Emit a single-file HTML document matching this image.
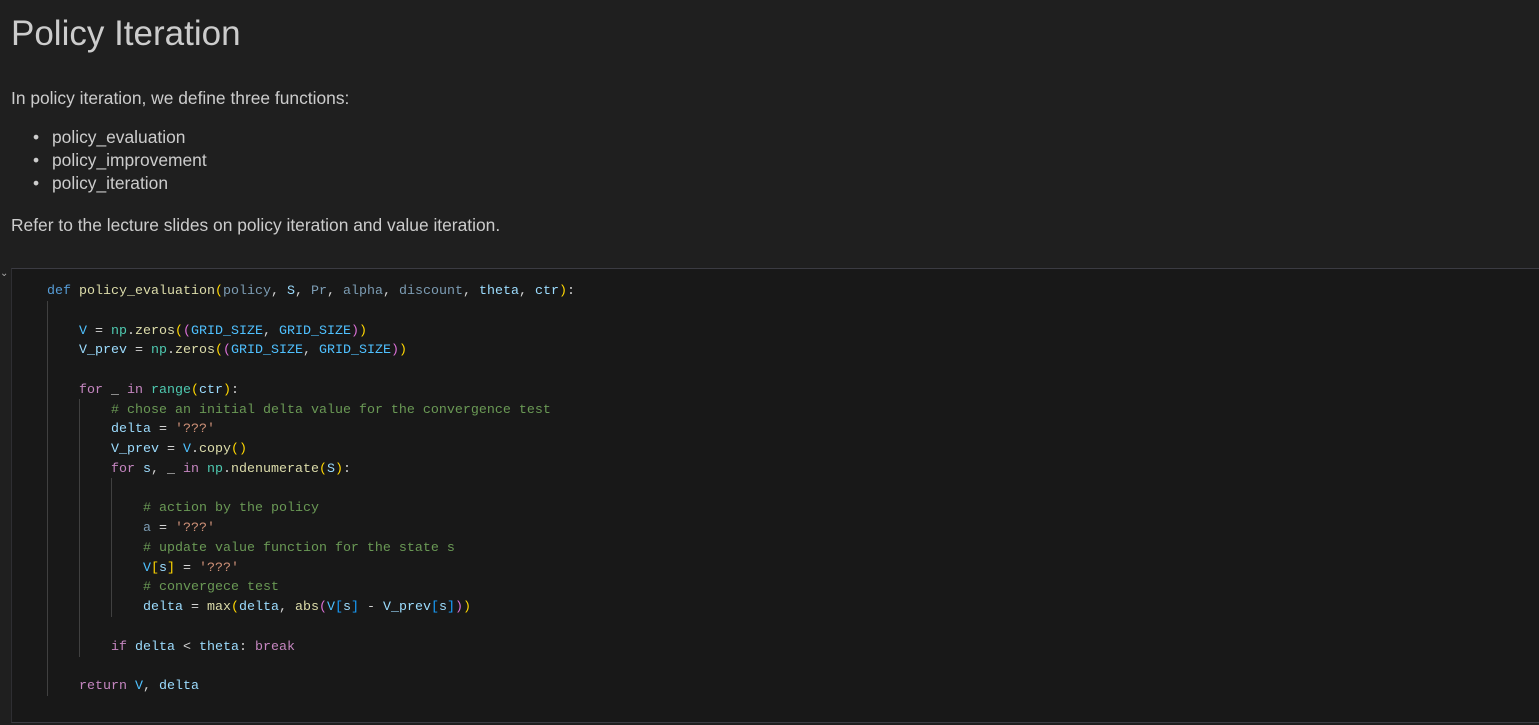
<!DOCTYPE html>
<html><head><meta charset="utf-8"><style>
html,body{margin:0;padding:0;background:#1f1f1f;width:1539px;height:725px;overflow:hidden;}
body{font-family:"Liberation Sans",sans-serif;color:#cccccc;position:relative;}
.t{position:absolute;white-space:nowrap;}
h1{position:absolute;left:11px;top:14px;margin:0;font-weight:normal;font-size:35px;color:#cccccc;}
.p{font-size:17.4px;}
.cell{position:absolute;left:11px;top:268px;width:1540px;height:453px;background:#181818;border-top:1px solid #3b3b42;border-left:1px solid #2e2e32;border-bottom:1px solid #3b3b42;}
.code{position:absolute;left:47px;top:282px;font-family:"Liberation Mono",monospace;font-size:13.33px;line-height:19.75px;color:#9cdcfe;white-space:pre;}
.g{position:absolute;width:1px;background:#404040;}
.k{color:#569cd6}.f{color:#dcdcaa}.d{color:#7c9cb3}.c{color:#c586c0}.m{color:#6a9955}.s{color:#ce9178}
.y{color:#ffd700}.pk{color:#da70d6}.b{color:#179fff}.cn{color:#4fc1ff}.n{color:#4ec9b0}.w{color:#d4d4d4}
</style></head><body>
<h1>Policy Iteration</h1>
<div class="t p" style="left:11px;top:88px">In policy iteration, we define three functions:</div>
<div class="t p" style="left:33px;top:127px">•</div><div class="t p" style="left:52px;top:127px">policy_evaluation</div>
<div class="t p" style="left:33px;top:150px">•</div><div class="t p" style="left:52px;top:150px">policy_improvement</div>
<div class="t p" style="left:33px;top:173px">•</div><div class="t p" style="left:52px;top:173px">policy_iteration</div>
<div class="t p" style="left:11px;top:215px">Refer to the lecture slides on policy iteration and value iteration.</div>
<div class="t" style="left:0;top:268px;font-size:10px;color:#aaa">&#8964;</div>
<div class="cell"></div>
<div class="g" style="left:47px;top:301px;height:395px"></div>
<div class="g" style="left:79px;top:399px;height:258px"></div>
<div class="g" style="left:111px;top:478px;height:139px"></div>
<div class="code"><span class="k">def</span> <span class="f">policy_evaluation</span><span class="y">(</span><span class="d">policy</span><span class="w">, </span>S<span class="w">, </span><span class="d">Pr</span><span class="w">, </span><span class="d">alpha</span><span class="w">, </span><span class="d">discount</span><span class="w">, </span>theta<span class="w">, </span>ctr<span class="y">)</span><span class="w">:</span>

    <span class="cn">V</span><span class="w"> = </span><span class="n">np</span><span class="w">.</span><span class="f">zeros</span><span class="y">(</span><span class="pk">(</span><span class="cn">GRID_SIZE</span><span class="w">, </span><span class="cn">GRID_SIZE</span><span class="pk">)</span><span class="y">)</span>
    V_prev<span class="w"> = </span><span class="n">np</span><span class="w">.</span><span class="f">zeros</span><span class="y">(</span><span class="pk">(</span><span class="cn">GRID_SIZE</span><span class="w">, </span><span class="cn">GRID_SIZE</span><span class="pk">)</span><span class="y">)</span>

    <span class="c">for</span> <span class="w">_</span> <span class="c">in</span> <span class="n">range</span><span class="y">(</span>ctr<span class="y">)</span><span class="w">:</span>
        <span class="m"># chose an initial delta value for the convergence test</span>
        delta<span class="w"> = </span><span class="s">'???'</span>
        V_prev<span class="w"> = </span><span class="cn">V</span><span class="w">.</span><span class="f">copy</span><span class="y">()</span>
        <span class="c">for</span> s<span class="w">, _ </span><span class="c">in</span> <span class="n">np</span><span class="w">.</span><span class="f">ndenumerate</span><span class="y">(</span>S<span class="y">)</span><span class="w">:</span>

            <span class="m"># action by the policy</span>
            <span class="d">a</span><span class="w"> = </span><span class="s">'???'</span>
            <span class="m"># update value function for the state s</span>
            <span class="cn">V</span><span class="y">[</span>s<span class="y">]</span><span class="w"> = </span><span class="s">'???'</span>
            <span class="m"># convergece test</span>
            delta<span class="w"> = </span><span class="f">max</span><span class="y">(</span>delta<span class="w">, </span><span class="f">abs</span><span class="pk">(</span><span class="cn">V</span><span class="b">[</span>s<span class="b">]</span><span class="w"> - </span>V_prev<span class="b">[</span>s<span class="b">]</span><span class="pk">)</span><span class="y">)</span>

        <span class="c">if</span> delta<span class="w"> &lt; </span>theta<span class="w">: </span><span class="c">break</span>

    <span class="c">return</span> <span class="cn">V</span><span class="w">, </span>delta</div>
</body></html>
